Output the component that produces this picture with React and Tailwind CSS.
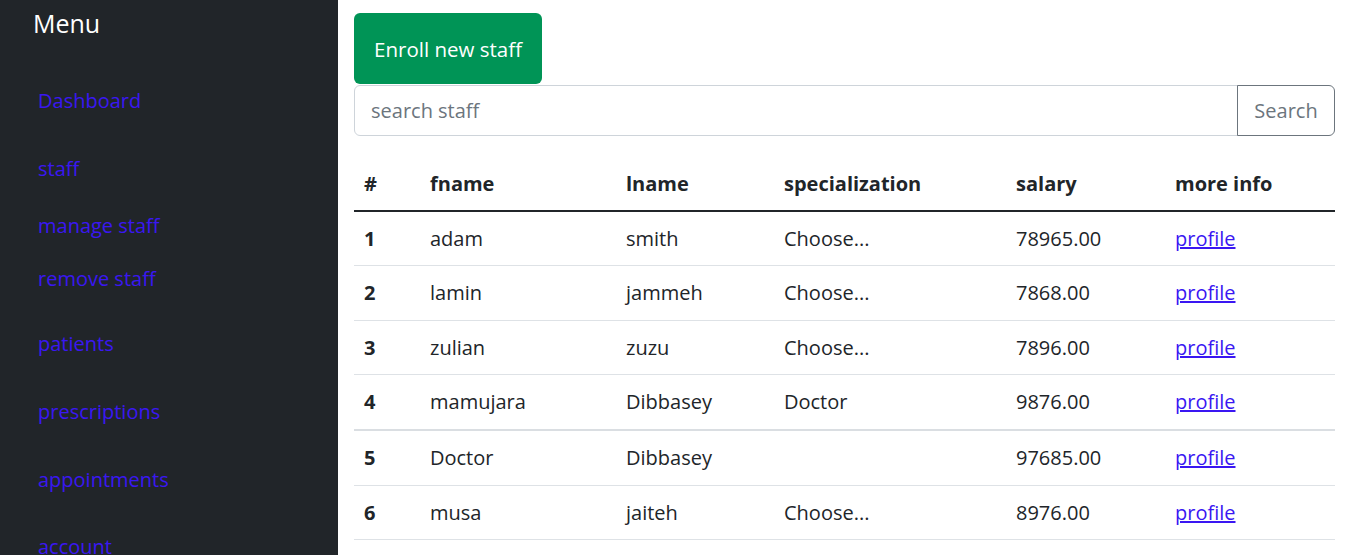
import React from "react";

const LINKS = [
  { label: "Dashboard", cls: "mt-[45px]" },
  { label: "staff", cls: "mt-[38px]" },
  { label: "manage staff", cls: "mt-[27px]" },
  { label: "remove staff", cls: "mt-[23px]" },
  { label: "patients", cls: "mt-[35px]" },
  { label: "prescriptions", cls: "mt-[38px]" },
  { label: "appointments", cls: "mt-[38px]" },
  { label: "account", cls: "mt-[37px]" },
];

const STAFF = [
  { id: 1, fname: "adam", lname: "smith", spec: "Choose...", salary: "78965.00" },
  { id: 2, fname: "lamin", lname: "jammeh", spec: "Choose...", salary: "7868.00" },
  { id: 3, fname: "zulian", lname: "zuzu", spec: "Choose...", salary: "7896.00" },
  { id: 4, fname: "mamujara", lname: "Dibbasey", spec: "Doctor", salary: "9876.00", divider: true },
  { id: 5, fname: "Doctor", lname: "Dibbasey", spec: "", salary: "97685.00" },
  { id: 6, fname: "musa", lname: "jaiteh", spec: "Choose...", salary: "8976.00" },
];

function Sidebar() {
  return (
    <aside className="w-[338px] shrink-0 bg-[#212529] h-[555px] overflow-hidden">
      <div className="pl-[33px] pt-[5px] text-[25px] leading-[36px] text-white">Menu</div>
      <ul className="pl-[38px]">
        {LINKS.map((l) => (
          <li key={l.label} className={l.cls}>
            <a href="#" className="text-[20px] leading-[30px] text-[#3a17f2]">
              {l.label}
            </a>
          </li>
        ))}
      </ul>
    </aside>
  );
}

export default function App() {
  return (
    <div className="flex w-[1346px] h-[555px] overflow-hidden bg-white text-[#212529] font-['Open_Sans',sans-serif]">
      <Sidebar />

      <main className="flex-1 pl-4 pr-[11px] pt-[13px]">
        {/* enroll */}
        <button
          type="button"
          className="w-[188px] h-[71px] rounded-[6px] bg-[#009456] text-white text-[20.5px] leading-[30px]"
        >
          Enroll new staff
        </button>

        {/* search */}
        <div className="flex mt-px h-[51px]">
          <input
            placeholder="search staff"
            className="flex-1 min-w-0 border border-[#ced4da] rounded-l-[6px] px-4 text-[20px] text-[#212529] placeholder:text-[#6c757d] outline-none"
          />
          <button
            type="button"
            className="w-[98px] -ml-px border border-[#6c757d] rounded-r-[6px] text-[20px] text-[#6c757d]"
          >
            Search
          </button>
        </div>

        {/* table */}
        <table className="w-full mt-5 table-fixed border-collapse text-[20px] leading-[29.6px]">
          <colgroup>
            <col className="w-[66px]" />
            <col className="w-[196px]" />
            <col className="w-[158px]" />
            <col className="w-[232px]" />
            <col className="w-[159px]" />
            <col />
          </colgroup>
          <thead>
            <tr className="border-b-2 border-[#212529] font-bold text-left">
              <th className="px-[10px] pt-[13px] pb-[11px]">#</th>
              <th className="px-[10px] pt-[13px] pb-[11px]">fname</th>
              <th className="px-[10px] pt-[13px] pb-[11px]">lname</th>
              <th className="px-[10px] pt-[13px] pb-[11px]">specialization</th>
              <th className="px-[10px] pt-[13px] pb-[11px]">salary</th>
              <th className="px-[10px] pt-[13px] pb-[11px]">more info</th>
            </tr>
          </thead>
          <tbody>
            {STAFF.map((s) => (
              <tr
                key={s.id}
                className={s.divider ? "border-b-2 border-[#dadee2]" : "border-b border-[#dee2e6]"}
              >
                <td className="px-[10px] py-[12px] font-bold">{s.id}</td>
                <td className="px-[10px] py-[12px]">{s.fname}</td>
                <td className="px-[10px] py-[12px]">{s.lname}</td>
                <td className="px-[10px] py-[12px]">{s.spec}</td>
                <td className="px-[10px] py-[12px]">{s.salary}</td>
                <td className="px-[10px] py-[12px]">
                  <a href="#" className="text-[#3a17f2] underline">
                    profile
                  </a>
                </td>
              </tr>
            ))}
          </tbody>
        </table>
      </main>
    </div>
  );
}
